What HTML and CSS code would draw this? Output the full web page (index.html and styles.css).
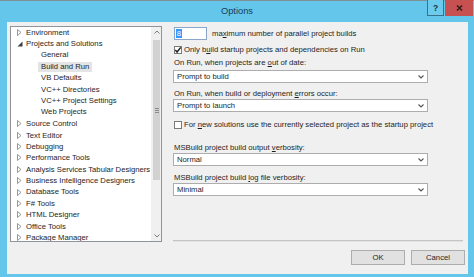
FILE: index.html
```html
<!DOCTYPE html>
<html>
<head>
<meta charset="utf-8">
<title>Options</title>
<link rel="stylesheet" href="styles.css">
</head>
<body>
<div class="window">
  <div class="titlebar">
    <span class="title">Options</span>
    <div class="caption-btns">
      <span class="cap help">?</span>
      <span class="cap close"><svg width="7" height="6" viewBox="0 0 7 6"><path d="M1 0.5 L6 5.5 M6 0.5 L1 5.5" stroke="#3b1f1f" stroke-width="1.6"/></svg></span>
    </div>
  </div>
  <div class="client">
    <div class="tree">
      <ul class="items">
        <li class="item"><span class="slot"><svg class="tri" width="5" height="7" viewBox="0 0 5 7"><path d="M0.5 0.5 L4 3.5 L0.5 6.5 Z" fill="none" stroke="#8c8c8c" stroke-width="0.9"/></svg></span>Environment</li>
        <li class="item"><span class="slot"><svg class="tri" width="6" height="6" viewBox="0 0 6 6"><path d="M5.5 0.5 L5.5 5.5 L0.5 5.5 Z" fill="#404040"/></svg></span>Projects and Solutions</li>
        <li class="item child"><span class="lbl">General</span></li>
        <li class="item child"><span class="lbl sel">Build and Run</span></li>
        <li class="item child"><span class="lbl">VB Defaults</span></li>
        <li class="item child"><span class="lbl">VC++ Directories</span></li>
        <li class="item child"><span class="lbl">VC++ Project Settings</span></li>
        <li class="item child"><span class="lbl">Web Projects</span></li>
        <li class="item"><span class="slot"><svg class="tri" width="5" height="7" viewBox="0 0 5 7"><path d="M0.5 0.5 L4 3.5 L0.5 6.5 Z" fill="none" stroke="#8c8c8c" stroke-width="0.9"/></svg></span>Source Control</li>
        <li class="item"><span class="slot"><svg class="tri" width="5" height="7" viewBox="0 0 5 7"><path d="M0.5 0.5 L4 3.5 L0.5 6.5 Z" fill="none" stroke="#8c8c8c" stroke-width="0.9"/></svg></span>Text Editor</li>
        <li class="item"><span class="slot"><svg class="tri" width="5" height="7" viewBox="0 0 5 7"><path d="M0.5 0.5 L4 3.5 L0.5 6.5 Z" fill="none" stroke="#8c8c8c" stroke-width="0.9"/></svg></span>Debugging</li>
        <li class="item"><span class="slot"><svg class="tri" width="5" height="7" viewBox="0 0 5 7"><path d="M0.5 0.5 L4 3.5 L0.5 6.5 Z" fill="none" stroke="#8c8c8c" stroke-width="0.9"/></svg></span>Performance Tools</li>
        <li class="item"><span class="slot"><svg class="tri" width="5" height="7" viewBox="0 0 5 7"><path d="M0.5 0.5 L4 3.5 L0.5 6.5 Z" fill="none" stroke="#8c8c8c" stroke-width="0.9"/></svg></span>Analysis Services Tabular Designers</li>
        <li class="item"><span class="slot"><svg class="tri" width="5" height="7" viewBox="0 0 5 7"><path d="M0.5 0.5 L4 3.5 L0.5 6.5 Z" fill="none" stroke="#8c8c8c" stroke-width="0.9"/></svg></span>Business Intelligence Designers</li>
        <li class="item"><span class="slot"><svg class="tri" width="5" height="7" viewBox="0 0 5 7"><path d="M0.5 0.5 L4 3.5 L0.5 6.5 Z" fill="none" stroke="#8c8c8c" stroke-width="0.9"/></svg></span>Database Tools</li>
        <li class="item"><span class="slot"><svg class="tri" width="5" height="7" viewBox="0 0 5 7"><path d="M0.5 0.5 L4 3.5 L0.5 6.5 Z" fill="none" stroke="#8c8c8c" stroke-width="0.9"/></svg></span>F# Tools</li>
        <li class="item"><span class="slot"><svg class="tri" width="5" height="7" viewBox="0 0 5 7"><path d="M0.5 0.5 L4 3.5 L0.5 6.5 Z" fill="none" stroke="#8c8c8c" stroke-width="0.9"/></svg></span>HTML Designer</li>
        <li class="item"><span class="slot"><svg class="tri" width="5" height="7" viewBox="0 0 5 7"><path d="M0.5 0.5 L4 3.5 L0.5 6.5 Z" fill="none" stroke="#8c8c8c" stroke-width="0.9"/></svg></span>Office Tools</li>
        <li class="item"><span class="slot"><svg class="tri" width="5" height="7" viewBox="0 0 5 7"><path d="M0.5 0.5 L4 3.5 L0.5 6.5 Z" fill="none" stroke="#8c8c8c" stroke-width="0.9"/></svg></span>Package Manager</li>
      </ul>
      <div class="scrollbar">
        <div class="sb-btn"><svg width="6" height="4" viewBox="0 0 6 4"><path d="M0.5 3.5 L3 1 L5.5 3.5" fill="none" stroke="#7a7a7a" stroke-width="1"/></svg></div>
        <div class="sb-track">
          <div class="sb-thumb">
            <div class="grip"></div>
          </div>
        </div>
        <div class="sb-btn"><svg width="6" height="4" viewBox="0 0 6 4"><path d="M0.5 0.5 L3 3 L5.5 0.5" fill="none" stroke="#7a7a7a" stroke-width="1"/></svg></div>
      </div>
    </div>

    <div class="panel">
      <div class="row-num">
        <div class="numbox"><span class="selnum">8</span></div>
        <span class="num-label">ma<u>x</u>imum number of parallel project builds</span>
      </div>
      <div class="check-row r-check1">
        <span class="checkbox"><svg width="8" height="8" viewBox="0 0 8 8"><path d="M1.3 4 L3.1 6 L6.7 1.4" fill="none" stroke="#222" stroke-width="1.5"/></svg></span>
        <span class="check-label">Only b<u>u</u>ild startup projects and dependencies on Run</span>
      </div>
      <div class="label r-l1">On Run, when projects are <u>o</u>ut of date:</div>
      <div class="combo r-c1"><span>Prompt to build</span><svg class="chev" width="6" height="4" viewBox="0 0 6 4"><path d="M0.5 0.5 L3 3 L5.5 0.5" fill="none" stroke="#555" stroke-width="1.1"/></svg></div>
      <div class="label r-l2">On Run, when build or deployment <u>e</u>rrors occur:</div>
      <div class="combo"><span>Prompt to launch</span><svg class="chev" width="6" height="4" viewBox="0 0 6 4"><path d="M0.5 0.5 L3 3 L5.5 0.5" fill="none" stroke="#555" stroke-width="1.1"/></svg></div>
      <div class="check-row r-check2">
        <span class="checkbox"></span>
        <span class="check-label">For <u>n</u>ew solutions use the currently selected project as the startup project</span>
      </div>
      <div class="label r-l3">MSBuild project build output <u>v</u>erbosity:</div>
      <div class="combo"><span>Normal</span><svg class="chev" width="6" height="4" viewBox="0 0 6 4"><path d="M0.5 0.5 L3 3 L5.5 0.5" fill="none" stroke="#555" stroke-width="1.1"/></svg></div>
      <div class="label r-l4">MSBuild project build <u>l</u>og file verbosity:</div>
      <div class="combo"><span>Minimal</span><svg class="chev" width="6" height="4" viewBox="0 0 6 4"><path d="M0.5 0.5 L3 3 L5.5 0.5" fill="none" stroke="#555" stroke-width="1.1"/></svg></div>
      <div class="spacer"></div>
      <div class="separator"></div>
      <div class="buttons">
        <span class="btn">OK</span>
        <span class="btn">Cancel</span>
      </div>
    </div>
  </div>
</div>
</body>
</html>
```

FILE: styles.css
```css
* {
  box-sizing: border-box;
  margin: 0;
  padding: 0;
}

html, body {
  width: 474px;
  height: 277px;
  overflow: hidden;
}

body {
  font-family: "Liberation Sans", Arial, sans-serif;
  font-size: 7.7px;
  color: #1e1e1e;
  background: #63c6ea;
}

u {
  text-decoration: underline;
  text-underline-offset: 1px;
}

.window {
  width: 474px;
  height: 277px;
  display: flex;
  flex-direction: column;
  background: #63c6ea;
  border-top: 1px solid #7f9097;
}

.titlebar {
  height: 21px;
  position: relative;
  display: flex;
  justify-content: center;
  align-items: center;
  padding-bottom: 1px;
}

.title {
  font-size: 9.3px;
  color: #1b3d5c;
}

.caption-btns {
  position: absolute;
  top: -1px;
  right: 1px;
  display: flex;
  gap: 1px;
}

.cap {
  height: 16px;
  display: flex;
  align-items: center;
  justify-content: center;
}

.help {
  width: 17px;
  border: 1px solid #3c6f8a;
  border-top: none;
  background: #6ccbec;
  color: #16324a;
  font-weight: bold;
  font-size: 8.5px;
}

.close {
  width: 28px;
  background: #c75050;
}

.client {
  flex: 1;
  margin: 0 6px 3px 7px;
  background: #f0f0f0;
  display: flex;
}

/* tree */
.tree {
  margin: 4px 0 0 3px;
  width: 152px;
  height: 216px;
  border: 1px solid #8f949b;
  background: #ffffff;
  display: flex;
  overflow: hidden;
}

.items {
  list-style: none;
  flex: 1;
  overflow: hidden;
  white-space: nowrap;
}

.item {
  height: 11.4px;
  line-height: 11.4px;
  display: flex;
  align-items: center;
  padding-left: 5px;
}

.slot {
  width: 10px;
  height: 11.4px;
  display: flex;
  align-items: center;
  padding-left: 1px;
}

.child {
  padding-left: 27px;
}

.lbl {
  padding: 0 3px;
  line-height: 10px;
  height: 10px;
}

.sel {
  background: #e4e4e4;
}

.scrollbar {
  width: 10px;
  display: flex;
  flex-direction: column;
  background: #f0f0f0;
  border-left: 1px solid #f0f0f0;
}

.sb-btn {
  height: 10px;
  display: flex;
  align-items: center;
  justify-content: center;
}

.sb-track {
  flex: 1;
  padding: 3px 1px 0 1px;
}

.sb-thumb {
  height: 140px;
  background: #d2d2d2;
  display: flex;
  align-items: center;
  justify-content: center;
}

.grip {
  width: 4px;
  height: 5px;
  border-top: 1px solid #8a8a8a;
  border-bottom: 1px solid #8a8a8a;
  position: relative;
  background: linear-gradient(#d2d2d2 0 1px, #8a8a8a 1px 2px, #d2d2d2 2px);
}

/* right panel */
.panel {
  flex: 1;
  margin-left: 11px;
  padding: 5px 3px 9px 0;
  display: flex;
  flex-direction: column;
  white-space: nowrap;
}

.row-num {
  height: 13px;
  display: flex;
  align-items: center;
}

.numbox {
  margin-left: 1px;
  width: 33px;
  height: 13px;
  border: 1px solid #8aa6c8;
  background: #ffffff;
  padding: 1px;
  display: flex;
  align-items: center;
}

.selnum {
  width: 6px;
  height: 9px;
  background: #3399ff;
  color: #ffffff;
  line-height: 9px;
  text-align: center;
}

.num-label {
  margin-left: 5px;
}

.check-row {
  height: 9px;
  display: flex;
  align-items: center;
}

.r-check1 { margin-top: 5px; }
.r-check2 { margin-top: 8px; }

.checkbox {
  margin-left: 1px;
  width: 8px;
  height: 8px;
  border: 1px solid #7a7a7a;
  background: #ffffff;
  display: flex;
  align-items: center;
  justify-content: center;
}

.checkbox svg {
  flex: none;
}

.check-label {
  margin-left: 2px;
}

.label {
  height: 10px;
  line-height: 10px;
  padding-left: 1px;
}

.r-l1 { margin-top: 4px; margin-bottom: 2px; }
.r-l2 { margin-top: 6px; }
.r-l3 { margin-top: 14px; }
.r-l4 { margin-top: 7px; }

.combo {
  width: 255px;
  height: 13px;
  border: 1px solid #adadad;
  background: #ffffff;
  display: flex;
  align-items: center;
  justify-content: space-between;
  padding: 0 3px 0 3px;
}

.spacer {
  flex: 1;
}

.separator {
  width: 290px;
  height: 2px;
  border-top: 1px solid #c4c4c4;
  border-bottom: 1px solid #e2e2e2;
}

.buttons {
  margin-top: 8px;
  display: flex;
  justify-content: flex-end;
  gap: 6px;
}

.btn {
  width: 54px;
  height: 15px;
  border: 1px solid #adadad;
  background: #e1e1e1;
  display: flex;
  align-items: center;
  justify-content: center;
}
```
